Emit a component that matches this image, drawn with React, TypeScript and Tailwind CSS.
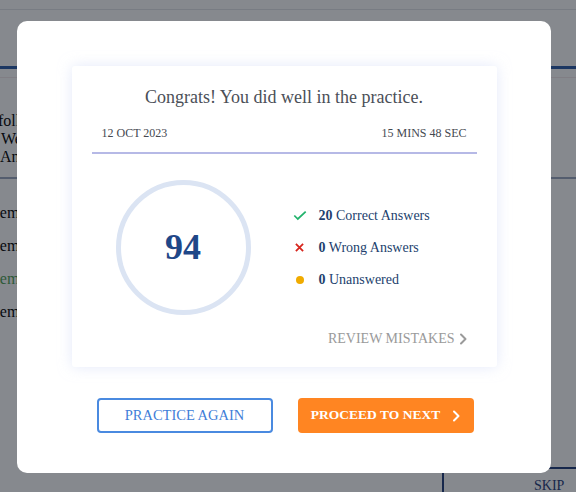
import React from 'react';

const Chevron = ({ className }: { className?: string }) => (
    <svg viewBox="0 0 8 12" className={className} fill="none" stroke="currentColor" strokeWidth="2" strokeLinecap="round" strokeLinejoin="round">
        <polyline points="2,1.5 6.5,6 2,10.5" />
    </svg>
);

const Background = () => (
    <div className="flex flex-col text-black">
        <div className="h-[10px] border-b border-[#e2e4e8]" />
        <div className="h-[56px]" />
        <div className="h-[3px] bg-[#2b5aa6]" />
        <div className="h-[9px] border-b border-[#f3e9ea]" />
        <div className="flex flex-col pt-[34px] text-[16px] leading-[18px]">
            <span className="whitespace-nowrap ml-[-2px]">following questions carefully</span>
            <span className="whitespace-nowrap ml-[1px]">We recommend that you review</span>
            <span className="whitespace-nowrap">An explanation is shown after</span>
        </div>
        <div className="mt-[11px] border-t-2 border-[#9aa7bf]" />
        <div className="flex flex-col pt-[24px] gap-[14px] text-[16px] leading-[19px]">
            <span className="ml-[-10px]">Item 1</span>
            <span className="ml-[-10px]">Item 2</span>
            <span className="ml-[-10px] text-[#4da153]">Item 3</span>
            <span className="ml-[-10px]">Item 4</span>
        </div>
    </div>
);

const Stat = ({ icon, num, label }: { icon: React.ReactNode; num: string; label: string }) => (
    <div className="h-[32px] flex items-center gap-[11px] text-[14px] text-[#233f6e]">
        <span className="w-[16px] flex items-center justify-center">{icon}</span>
        <span>
            <b>{num}</b> {label}
        </span>
    </div>
);

const App = () => {
    return (
        <div className="relative w-[576px] h-[492px] overflow-hidden bg-white" style={{ fontFamily: '"Liberation Serif", serif' }}>
            <Background />
            <div className="absolute left-[442px] top-[467px] w-[140px] h-[30px] border-l-2 border-t-2 border-[#1f3a78] text-[#1f3a78] text-[14px] pl-[90px] pt-[6px]">
                SKIP
            </div>
            <div className="absolute inset-0 bg-[rgba(13,19,29,0.5)] pt-[21px] pl-[17px]">
                <div className="w-[534px] h-[452px] bg-white rounded-[10px] pt-[45px] flex flex-col items-center">
                    <div className="w-[425px] h-[301px] bg-white rounded-[3px] shadow-[0_0_14px_rgba(205,215,245,0.55)] pt-[20px] flex flex-col">
                        <h2 className="text-center text-[18px] leading-[22px] text-[#4b4f57]">
                            Congrats! You did well in the practice.
                        </h2>
                        <div className="mx-[20px] mt-[17px] px-[10px] pb-[11px] border-b-2 border-[#b6b9e6] flex justify-between text-[12px] leading-[16px] text-[#454850]">
                            <span>12 OCT 2023</span>
                            <span>15 MINS 48 SEC</span>
                        </div>
                        <div className="flex items-center pl-[44px] mt-[26px] gap-[41px]">
                            <div className="w-[135px] h-[135px] rounded-full border-[5px] border-[#dbe4f3] flex items-center justify-center">
                                <span className="text-[36px] font-bold text-[#1f4788] leading-none mt-[-2px]">94</span>
                            </div>
                            <div className="flex flex-col">
                                <Stat
                                    icon={
                                        <svg viewBox="0 0 16 12" className="w-[14px] h-[11px]" fill="none" stroke="#22b36c" strokeWidth="2">
                                            <polyline points="1.5,6 5.5,10 14.5,1.5" />
                                        </svg>
                                    }
                                    num="20"
                                    label="Correct Answers"
                                />
                                <Stat
                                    icon={
                                        <svg viewBox="0 0 10 10" className="w-[9px] h-[9px]" fill="none" stroke="#d7261e" strokeWidth="2">
                                            <path d="M1 1 L9 9 M9 1 L1 9" />
                                        </svg>
                                    }
                                    num="0"
                                    label="Wrong Answers"
                                />
                                <Stat icon={<span className="w-[8px] h-[8px] rounded-full bg-[#f0ab00]" />} num="0" label="Unanswered" />
                            </div>
                        </div>
                        <div className="mt-[16px] pr-[30px] flex justify-end items-center gap-[4px] text-[14px] leading-[16px] text-[#9a9a9a]">
                            <span>REVIEW MISTAKES</span>
                            <Chevron className="w-[8px] h-[12px]" />
                        </div>
                    </div>
                    <div className="mt-[31px] ml-[2px] flex gap-[25px]">
                        <button className="w-[176px] h-[35px] border-2 border-[#4a8ae0] rounded-[4px] text-[#3f7ed8] text-[14.5px]">
                            PRACTICE AGAIN
                        </button>
                        <button className="w-[176px] h-[35px] bg-[#ff8522] rounded-[4px] text-white text-[13.5px] font-bold flex items-center justify-center gap-[12px]">
                            <span>PROCEED TO NEXT</span>
                            <Chevron className="w-[8px] h-[12px]" />
                        </button>
                    </div>
                </div>
            </div>
        </div>
    );
};

export default App;
